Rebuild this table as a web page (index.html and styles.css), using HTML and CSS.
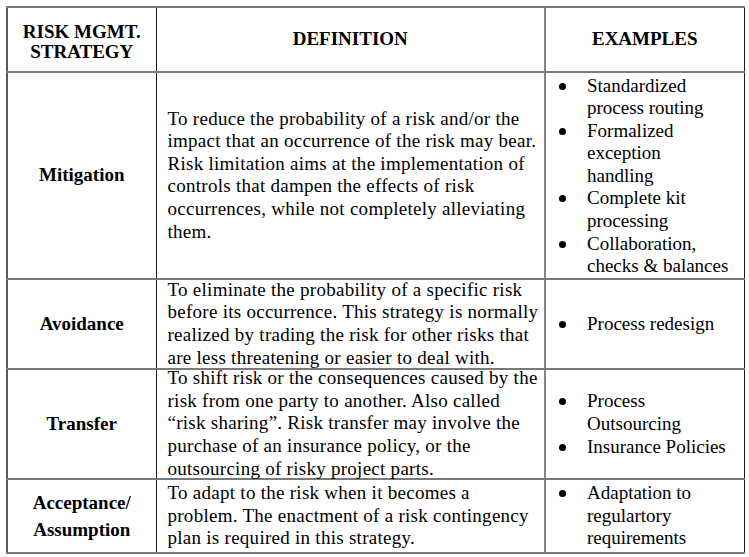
FILE: index.html
```html
<!DOCTYPE html>
<html>
<head>
<meta charset="utf-8">
<link rel="stylesheet" href="styles.css">
</head>
<body>
<table class="risk">
  <colgroup>
    <col class="c-strategy">
    <col class="c-definition">
    <col class="c-examples">
  </colgroup>
  <thead>
    <tr class="head">
      <th class="strategy two-line">RISK MGMT.<br>STRATEGY</th>
      <th class="definition">DEFINITION</th>
      <th class="examples">EXAMPLES</th>
    </tr>
  </thead>
  <tbody>
    <tr>
      <th class="strategy">Mitigation</th>
      <td class="definition">To reduce the probability of a risk and/or the<br>impact that an occurrence of the risk may bear.<br>Risk limitation aims at the implementation of<br>controls that dampen the effects of risk<br>occurrences, while not completely alleviating<br>them.</td>
      <td class="examples">
        <ul class="bullets bullets-long">
          <li><span>Standardized<br>process routing</span></li>
          <li><span>Formalized<br>exception<br>handling</span></li>
          <li><span>Complete kit<br>processing</span></li>
          <li><span>Collaboration,<br>checks &amp; balances</span></li>
        </ul>
      </td>
    </tr>
    <tr>
      <th class="strategy">Avoidance</th>
      <td class="definition"><div class="tight-1">To eliminate the probability of a specific risk<br>before its occurrence. This strategy is normally<br>realized by trading the risk for other risks that<br>are less threatening or easier to deal with.</div></td>
      <td class="examples">
        <ul class="bullets">
          <li><span>Process redesign</span></li>
        </ul>
      </td>
    </tr>
    <tr>
      <th class="strategy">Transfer</th>
      <td class="definition"><div class="tight-3">To shift risk or the consequences caused by the<br>risk from one party to another. Also called<br>“risk sharing”. Risk transfer may involve the<br>purchase of an insurance policy, or the<br>outsourcing of risky project parts.</div></td>
      <td class="examples">
        <ul class="bullets">
          <li><span>Process<br>Outsourcing</span></li>
          <li><span>Insurance Policies</span></li>
        </ul>
      </td>
    </tr>
    <tr class="last">
      <th class="strategy spaced">Acceptance/<br>Assumption</th>
      <td class="definition">To adapt to the risk when it becomes a<br>problem. The enactment of a risk contingency<br>plan is required in this strategy.</td>
      <td class="examples">
        <ul class="bullets">
          <li><span>Adaptation to<br>regulartory<br>requirements</span></li>
        </ul>
      </td>
    </tr>
  </tbody>
</table>
</body>
</html>
```
FILE: styles.css
```css
html, body {
  margin: 0;
  padding: 0;
  background: #fff;
}

body {
  font-family: "Liberation Serif", "Times New Roman", serif;
  font-size: 19px;
  line-height: 22.6px;
  color: #000;
}

.risk {
  border-collapse: collapse;
  table-layout: fixed;
  width: 737px;
  margin: 6px 0 0 6px;
}

.c-strategy { width: 149px; }
.c-definition { width: 389px; }
.c-examples { width: 199px; }

.risk th,
.risk td {
  padding: 0;
  vertical-align: middle;
  border-top: 2px solid #7a7a7a;
  border-bottom: 2px solid #7a7a7a;
}

.risk .strategy {
  font-weight: bold;
  text-align: center;
  border-left: 2px solid #5a5a5a;
  border-right: 1px solid #1a1a1a;
}

.risk .two-line {
  line-height: 20px;
  padding-top: 4px;
}

.risk .spaced {
  line-height: 27px;
}

.risk .examples {
  border-left: 2px solid #858585;
  border-right: 1px solid #1a1a1a;
}

.head {
  height: 65px;
}

.head th {
  font-weight: bold;
  text-align: center;
}

.risk td.definition {
  padding: 0 4px 0 11px;
  text-align: left;
  white-space: nowrap;
  letter-spacing: 0.27px;
}

.risk .last td {
  padding-top: 2px;
  padding-bottom: 2px;
}

.tight-1 {
  margin: -1px 0;
}

.tight-3 {
  margin: -3px 0 -2px;
}

.bullets {
  list-style: none;
  margin: 0;
  padding: 0 4px 0 13px;
}

.bullets-long {
  padding-top: 1.5px;
}

.bullets li {
  display: flex;
  align-items: flex-start;
  white-space: nowrap;
}

.bullets li::before {
  content: "";
  flex: 0 0 auto;
  width: 7px;
  height: 7px;
  border-radius: 50%;
  background: #000;
  margin: 8px 21px 0 0;
}
```
